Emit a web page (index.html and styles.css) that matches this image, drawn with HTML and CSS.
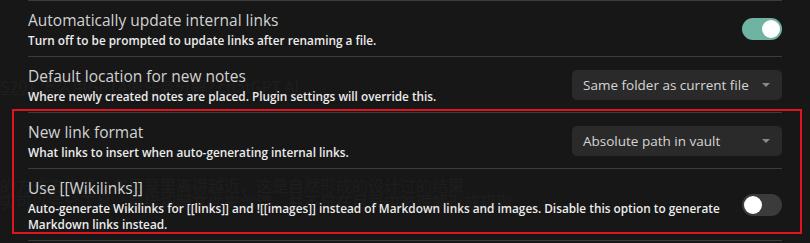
FILE: index.html
```html
<!DOCTYPE html>
<html lang="en">
<head>
<meta charset="utf-8">
<link rel="stylesheet" href="styles.css">
</head>
<body>
<div class="ghost" aria-hidden="true">
  <div class="ghost-line g1"><span class="ghost-link">S201 怎么用GPT4做任务分解?</span> chatGPT AI</div>
  <div class="ghost-line g2">的方式去组织，在目录里离得越近，这是自然形成的设计过的结果</div>
  <div class="ghost-line g3">实可以完分工具，直接按照文件夹创建，并不是在目录中被理解形成规则</div>
</div>
<div class="settings">
  <div class="item">
    <div class="info">
      <div class="name">Automatically update internal links</div>
      <div class="desc">Turn off to be prompted to update links after renaming a file.</div>
    </div>
    <div class="control"><div class="toggle on"><span class="knob"></span></div></div>
  </div>
  <div class="item">
    <div class="info">
      <div class="name">Default location for new notes</div>
      <div class="desc">Where newly created notes are placed. Plugin settings will override this.</div>
    </div>
    <div class="control"><div class="dropdown"><span>Same folder as current file</span><span class="caret"></span></div></div>
  </div>
  <div class="item">
    <div class="info">
      <div class="name">New link format</div>
      <div class="desc">What links to insert when auto-generating internal links.</div>
    </div>
    <div class="control"><div class="dropdown"><span>Absolute path in vault</span><span class="caret"></span></div></div>
  </div>
  <div class="item tall">
    <div class="info">
      <div class="name">Use [[Wikilinks]]</div>
      <div class="desc">Auto-generate Wikilinks for [[links]] and ![[images]] instead of Markdown links and images. Disable this option to generate Markdown links instead.</div>
    </div>
    <div class="control"><div class="toggle"><span class="knob"></span></div></div>
  </div>
  <div class="item end"></div>
</div>
<div class="highlight"></div>
</body>
</html>
```
FILE: styles.css
```css
html, body {
  margin: 0;
  padding: 0;
  background: #171717;
  width: 810px;
  height: 243px;
  overflow: hidden;
}
body {
  position: relative;
  font-family: "Open Sans", "Noto Sans CJK SC", sans-serif;
}
.ghost {
  position: absolute;
  left: 0;
  top: 0;
  z-index: 0;
  font-family: "Noto Sans CJK SC", sans-serif;
  color: #1e1e1e;
  font-size: 16px;
  line-height: 16px;
}
.ghost-line { position: absolute; white-space: nowrap; }
.g1 { top: 78px; left: 0; font-size: 16px; }
.ghost-link { text-decoration: underline; }
.g2 { top: 177px; left: 0; }
.g3 { top: 193px; left: 0; }
.settings {
  position: relative;
  z-index: 1;
  margin-left: 28px;
  width: 754px;
}
.item {
  display: flex;
  align-items: center;
  border-top: 1px solid #3c3c3c;
  height: 55px;
  box-sizing: content-box;
}
.item.tall { height: 71px; }
.item.end { height: 4px; }
.info {
  flex: 1;
  padding-top: 1px;
  margin-right: 8px;
}
.name {
  color: #d2d2d2;
  font-size: 15.5px;
  line-height: 21px;
}
.desc {
  color: #ececec;
  font-size: 11.8px;
  font-weight: 600;
  line-height: 16px;
  margin-top: 1px;
}
.control { display: flex; align-items: center; }
.toggle {
  width: 40px;
  height: 22px;
  border-radius: 11px;
  background: #3b3b3b;
  display: flex;
  align-items: center;
  padding: 0 2px;
  box-sizing: border-box;
}
.toggle.on { background: #6fb3a3; justify-content: flex-end; }
.knob {
  width: 18px;
  height: 18px;
  border-radius: 50%;
  background: #ffffff;
}
.dropdown {
  width: 210px;
  height: 30px;
  box-sizing: border-box;
  background: #2a2a2a;
  border-radius: 5px;
  display: flex;
  align-items: center;
  justify-content: space-between;
  padding: 0 12px 0 11px;
  color: #d6d6d6;
  font-size: 13.5px;
}
.caret {
  width: 0;
  height: 0;
  border-left: 4px solid transparent;
  border-right: 4px solid transparent;
  border-top: 4px solid #8a8a8a;
}
.highlight {
  position: absolute;
  z-index: 2;
  left: 12px;
  top: 109px;
  width: 790px;
  height: 125px;
  box-sizing: border-box;
  border: 2px solid #e0141f;
}
```
